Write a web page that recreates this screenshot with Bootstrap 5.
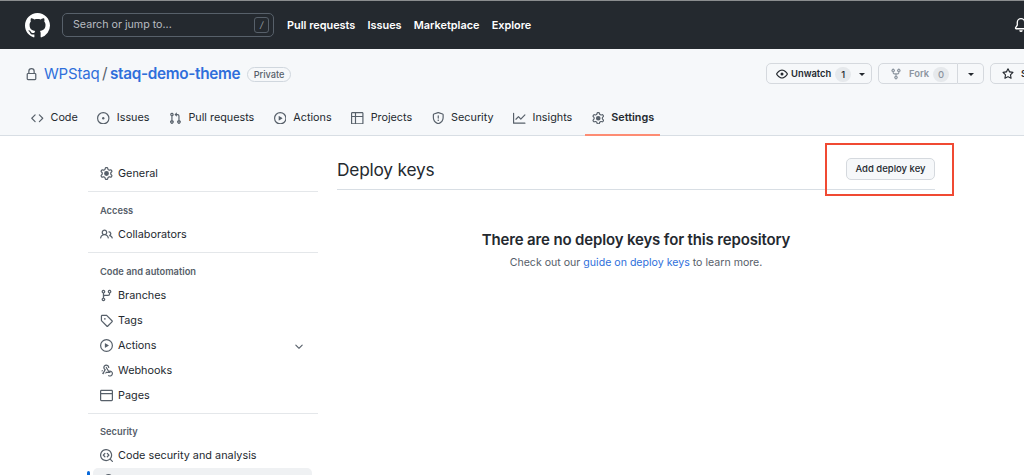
<!doctype html>
<html lang="en">
<head>
<meta charset="utf-8">
<title>Deploy keys</title>
<link rel="stylesheet" href="https://cdn.jsdelivr.net/npm/bootstrap@5.3.0/dist/css/bootstrap.min.css">
<style>
html,body{height:475px;overflow:hidden}
body{font-family:"Inter","Liberation Sans",sans-serif;color:#24292f;font-size:11.6px;background:#fff}
a{text-decoration:none}
.oc{fill:currentColor;flex:none;display:block}
.gh-top{height:49px;background:#24292f;border-top:1px solid #8b8d8f;padding-left:25px;color:#fff}
.gh-logo{width:25px;height:25px;margin-right:12px}
.gh-search{width:212px;height:24px;border:1px solid #57606a;border-radius:5px;padding:0 4px 0 10px;color:#b8bcc1;font-size:10.7px;margin-right:13px}
.gh-slash{width:15px;height:16px;border:1px solid #57606a;border-radius:3px;font-size:9px;line-height:14px;text-align:center;color:#9aa0a6;font-style:italic}
.gh-link{color:#fff;font-weight:600;font-size:10.9px;margin-right:12.2px;white-space:nowrap}
.gh-bell{position:absolute;left:1014px;top:18px;width:14px;height:14px;color:#fff}
.gh-head{height:87px;background:#f6f8fa;border-bottom:1px solid #d8dee4;position:relative}
.gh-titlebar{height:50px;padding:0 0 0 25px;position:relative}
.gh-lock{width:13px;height:13px;color:#57606a;margin-right:6px}
.gh-owner{font-size:15px;color:#2f6fdb;letter-spacing:-.2px}
.gh-sep{font-size:15.4px;color:#57606a;margin:0 2.5px}
.gh-repo{font-size:15.3px;font-weight:600;color:#2f6fdb;letter-spacing:-.3px}
.gh-private{margin-left:7px;height:15px;border:1px solid #d0d7de;border-radius:8px;padding:0 5.5px;font-size:9.2px;line-height:13px;font-weight:500;color:#57606a}
.gh-actions{position:absolute;left:766px;top:14px;width:320px;gap:6px}
.gh-btn{height:21px;border:1px solid #d5d9de;border-radius:5px;background:#f6f8fa;font-size:9.4px;font-weight:600;color:#24292f;padding:1px 0 0;white-space:nowrap}
.gh-btn.off{color:#8c959f}
.gh-count{background:#e6e9ec;border-radius:8px;min-width:16px;height:15px;line-height:15px;text-align:center;font-size:9.5px;font-weight:500;padding:0 2px}
.gh-caret{width:0;height:0;border-left:3px solid transparent;border-right:3px solid transparent;border-top:3.5px solid #24292f}
.gh-ico-a{margin:0 3px 0 9px}
.gh-ico-b{margin:0 7px 0 11px}
.gh-tabs{padding-left:24.5px;margin-top:3px;height:33px;flex-wrap:nowrap;gap:0}
.gh-tab{height:34px;padding:0 6.5px;margin-right:6.5px;color:#24292f;font-size:10.8px;gap:7px;border-bottom:2px solid transparent;white-space:nowrap}
.gh-tab .oc{width:12.5px;height:12.5px;color:#57606a}
.gh-tab.on{font-weight:600;border-bottom-color:#fd8c73;padding-right:6px}
.gh-page{padding-left:88px;gap:19px}
.gh-side{width:230px;flex:none;padding-top:25px}
.gh-item{height:25px;padding-left:12px;gap:5px;color:#24292f;font-size:10.85px;position:relative}
.gh-item .oc{width:13px;height:13px;color:#57606a}
.gh-rule{border-top:1px solid #e4e7ea;margin:5px 0 10px}
.gh-rule.gh-tight{margin-bottom:9px}
.gh-cap{font-size:9.3px;font-weight:600;color:#57606a;height:18px;line-height:18px;padding-left:12px;margin-bottom:2px}
.gh-sel{background:#eff1f3;border-radius:5px;margin:0 6px 0 5px;padding-left:7px;height:25px}
.gh-sel::before{content:"";position:absolute;left:-6px;top:3px;width:3px;height:20px;border-radius:2px;background:#0969da}
.gh-chev{margin-left:auto;margin-right:13px;width:12px!important;height:12px!important}
.gh-main{width:598px;flex:none;padding-top:21px;position:relative}
.gh-mhead{height:33px;border-bottom:1px solid #d8dee4}
.gh-mhead h1{font-size:17.3px;font-weight:400;margin:0;line-height:25px;letter-spacing:-.2px}
.gh-add{height:22px;width:89px;border:1px solid #d5d9de;border-radius:5px;background:#f6f8fa;color:#24292f;font-size:9.5px;font-weight:500;padding:1px 0 0;margin-top:1px}
.gh-mark{position:absolute;left:488px;top:7px;width:129px;height:53px;border:2px solid #f04a33;pointer-events:none}
.gh-empty{text-align:center;padding-top:40px}
.gh-empty h2{font-size:15px;font-weight:600;margin:0;line-height:20px;letter-spacing:-.15px}
.gh-empty p{font-size:10.6px;color:#57606a;margin:5px 0 0;line-height:16px}
.gh-empty a{color:#2f6fdb}
</style>
</head>
<body>
<svg width="0" height="0" class="position-absolute">
<symbol id="i-gear" viewBox="0 0 16 16"><path d="M7.429 1.525a6.593 6.593 0 011.142 0c.036.003.108.036.137.146l.289 1.105c.147.56.55.967.997 1.189.174.086.341.183.501.29.417.278.97.423 1.53.27l1.102-.303c.11-.03.175.016.195.046.219.31.41.641.573.989.014.031.022.11-.059.19l-.815.806c-.411.406-.562.957-.53 1.456a4.588 4.588 0 010 .582c-.032.499.119 1.05.53 1.456l.815.806c.08.08.073.159.059.19a6.494 6.494 0 01-.573.99c-.02.029-.086.074-.195.045l-1.103-.303c-.559-.153-1.112-.008-1.529.27-.16.107-.327.204-.5.29-.449.222-.851.628-.998 1.189l-.289 1.105c-.029.11-.101.143-.137.146a6.613 6.613 0 01-1.142 0c-.036-.003-.108-.037-.137-.146l-.289-1.105c-.147-.56-.55-.967-.997-1.189a4.502 4.502 0 01-.501-.29c-.417-.278-.97-.423-1.53-.27l-1.102.303c-.11.03-.175-.016-.195-.046a6.492 6.492 0 01-.573-.989c-.014-.031-.022-.11.059-.19l.815-.806c.411-.406.562-.957.53-1.456a4.587 4.587 0 010-.582c.032-.499-.119-1.05-.53-1.456l-.815-.806c-.08-.08-.073-.159-.059-.19a6.44 6.44 0 01.573-.99c.02-.029.086-.075.195-.045l1.103.303c.559.153 1.112.008 1.529-.27.16-.107.327-.204.5-.29.449-.222.851-.628.998-1.189l.289-1.105c.029-.11.101-.143.137-.146zM8 0c-.236 0-.47.01-.701.03-.743.065-1.29.615-1.458 1.261l-.29 1.106c-.017.066-.078.158-.211.224a5.994 5.994 0 00-.668.386c-.123.082-.233.09-.3.071L3.27 2.776c-.644-.177-1.392.02-1.82.63a7.977 7.977 0 00-.704 1.217c-.315.675-.111 1.422.363 1.891l.815.806c.05.048.098.147.088.294a6.084 6.084 0 000 .772c.01.147-.038.246-.088.294l-.815.806c-.474.469-.678 1.216-.363 1.891.2.428.436.835.704 1.218.428.609 1.176.806 1.82.63l1.103-.303c.066-.019.176-.011.299.071.213.143.436.272.668.386.133.066.194.158.212.224l.289 1.106c.169.646.715 1.196 1.458 1.26a8.094 8.094 0 001.402 0c.743-.064 1.29-.614 1.458-1.26l.29-1.106c.017-.066.078-.158.211-.224a5.98 5.98 0 00.668-.386c.123-.082.233-.09.3-.071l1.102.302c.644.177 1.392-.02 1.82-.63.268-.382.505-.789.704-1.217.315-.675.111-1.422-.364-1.891l-.814-.806c-.05-.048-.098-.147-.088-.294a6.1 6.1 0 000-.772c-.01-.147.039-.246.088-.294l.814-.806c.475-.469.679-1.216.364-1.891a7.992 7.992 0 00-.704-1.218c-.428-.609-1.176-.806-1.82-.63l-1.103.303c-.066.019-.176.011-.299-.071a5.991 5.991 0 00-.668-.386c-.133-.066-.194-.158-.212-.224L10.16 1.29C9.99.645 9.444.095 8.701.031A8.094 8.094 0 008 0zm1.5 8a1.5 1.5 0 11-3 0 1.5 1.5 0 013 0zM11 8a3 3 0 11-6 0 3 3 0 016 0z"/></symbol>
<symbol id="i-play" viewBox="0 0 16 16"><path d="M1.5 8a6.5 6.5 0 1113 0 6.5 6.5 0 01-13 0zM8 0a8 8 0 100 16A8 8 0 008 0zM6.379 5.227A.25.25 0 006 5.442v5.117a.25.25 0 00.379.214l4.264-2.559a.25.25 0 000-.428L6.379 5.227z"/></symbol>
</svg>

<header class="gh-top d-flex align-items-center">
  <svg class="oc gh-logo" viewBox="0 0 16 16"><path d="M8 0C3.58 0 0 3.58 0 8c0 3.54 2.29 6.53 5.47 7.59.4.07.55-.17.55-.38 0-.19-.01-.82-.01-1.49-2.01.37-2.53-.49-2.69-.94-.09-.23-.48-.94-.82-1.13-.28-.15-.68-.52-.01-.53.63-.01 1.08.58 1.23.82.72 1.21 1.87.87 2.33.66.07-.52.28-.87.51-1.07-1.78-.2-3.64-.89-3.64-3.95 0-.87.31-1.59.82-2.15-.08-.2-.36-1.02.08-2.12 0 0 .67-.21 2.2.82.64-.18 1.32-.27 2-.27.68 0 1.36.09 2 .27 1.53-1.04 2.2-.82 2.2-.82.44 1.1.16 1.92.08 2.12.51.56.82 1.27.82 2.15 0 3.07-1.87 3.75-3.65 3.95.29.25.54.73.54 1.48 0 1.07-.01 1.93-.01 2.2 0 .21.15.46.55.38A8.013 8.013 0 0016 8c0-4.42-3.58-8-8-8z"/></svg>
  <div class="gh-search d-flex align-items-center justify-content-between"><span>Search or jump to...</span><span class="gh-slash">/</span></div>
  <a class="gh-link" href="#">Pull requests</a>
  <a class="gh-link" href="#">Issues</a>
  <a class="gh-link" href="#">Marketplace</a>
  <a class="gh-link" href="#">Explore</a>
  <svg class="oc gh-bell" viewBox="0 0 16 16"><path d="M8 16a2 2 0 001.985-1.75c.017-.137-.097-.25-.235-.25h-3.5c-.138 0-.252.113-.235.25A2 2 0 008 16z"/><path fill-rule="evenodd" d="M3 5a5 5 0 0110 0v2.947c0 .05.015.098.042.139l1.703 2.555A1.518 1.518 0 0113.482 13H2.518a1.518 1.518 0 01-1.263-2.36l1.703-2.554A.25.25 0 003 7.947V5zm5-3.5A3.5 3.5 0 004.5 5v2.947c0 .346-.102.683-.294.97l-1.703 2.556a.018.018 0 00-.003.01l.001.006c0 .002.002.004.004.006a.017.017 0 00.006.004l.007.001h10.964l.007-.001a.018.018 0 00.006-.004.016.016 0 00.004-.006l.001-.007a.017.017 0 00-.003-.01l-1.703-2.554a1.75 1.75 0 01-.294-.97V5A3.5 3.5 0 008 1.5z"/></svg>
</header>

<section class="gh-head">
  <div class="gh-titlebar d-flex align-items-center">
    <svg class="oc gh-lock" viewBox="0 0 16 16"><path fill-rule="evenodd" d="M4 4v2h-.25A1.75 1.75 0 002 7.75v5.5c0 .966.784 1.75 1.75 1.75h8.5A1.75 1.75 0 0014 13.25v-5.5A1.75 1.75 0 0012.25 6H12V4a4 4 0 10-8 0zm6.5 2V4a2.5 2.5 0 00-5 0v2h5zM12 7.5h.25a.25.25 0 01.25.25v5.5a.25.25 0 01-.25.25h-8.5a.25.25 0 01-.25-.25v-5.5a.25.25 0 01.25-.25H12z"/></svg>
    <a class="gh-owner" href="#">WPStaq</a><span class="gh-sep">/</span><a class="gh-repo" href="#">staq-demo-theme</a>
    <span class="gh-private">Private</span>
    <div class="gh-actions d-flex">
      <button class="gh-btn d-flex align-items-center" style="width:106px"><svg class="oc gh-ico-a" width="12" height="12" viewBox="0 0 16 16"><path fill-rule="evenodd" d="M1.679 7.932c.412-.621 1.242-1.75 2.366-2.717C5.175 4.242 6.527 3.5 8 3.5c1.473 0 2.824.742 3.955 1.715 1.124.967 1.954 2.096 2.366 2.717a.119.119 0 010 .136c-.412.621-1.242 1.75-2.366 2.717C10.825 11.758 9.473 12.5 8 12.5c-1.473 0-2.824-.742-3.955-1.715C2.92 9.818 2.09 8.69 1.679 8.068a.119.119 0 010-.136zM8 2c-1.981 0-3.67.992-4.933 2.078C1.797 5.169.88 6.423.43 7.1a1.619 1.619 0 000 1.798c.45.678 1.367 1.932 2.637 3.024C4.329 13.008 6.019 14 8 14c1.981 0 3.67-.992 4.933-2.078 1.27-1.091 2.187-2.345 2.637-3.023a1.619 1.619 0 000-1.798c-.45-.678-1.367-1.932-2.637-3.023C11.671 2.992 9.981 2 8 2zm0 8a2 2 0 100-4 2 2 0 000 4z"/></svg>Unwatch<span class="gh-count ms-1">1</span><span class="gh-caret ms-2"></span></button>
      <div class="d-flex">
        <button class="gh-btn off d-flex align-items-center rounded-end-0" style="width:80px"><svg class="oc gh-ico-b" width="12" height="12" viewBox="0 0 16 16"><path fill-rule="evenodd" d="M5 3.25a.75.75 0 11-1.5 0 .75.75 0 011.5 0zm0 2.122a2.25 2.25 0 10-1.5 0v.878A2.25 2.25 0 005.75 8.5h1.5v2.128a2.251 2.251 0 101.5 0V8.5h1.5a2.25 2.25 0 002.25-2.25v-.878a2.25 2.25 0 10-1.5 0v.878a.75.75 0 01-.75.75h-4.5A.75.75 0 015 6.25v-.878zm3.75 7.378a.75.75 0 11-1.5 0 .75.75 0 011.5 0zm3-8.75a.75.75 0 100-1.5.75.75 0 000 1.5z"/></svg>Fork<span class="gh-count ms-1">0</span></button>
        <button class="gh-btn d-flex align-items-center justify-content-center rounded-start-0 border-start-0" style="width:26px"><span class="gh-caret"></span></button>
      </div>
      <button class="gh-btn d-flex align-items-center" style="width:80px"><svg class="oc gh-ico-b" width="12" height="12" viewBox="0 0 16 16"><path fill-rule="evenodd" d="M8 .25a.75.75 0 01.673.418l1.882 3.815 4.21.612a.75.75 0 01.416 1.279l-3.046 2.97.719 4.192a.75.75 0 01-1.088.791L8 12.347l-3.766 1.98a.75.75 0 01-1.088-.79l.72-4.194L.818 6.374a.75.75 0 01.416-1.28l4.21-.611L7.327.668A.75.75 0 018 .25zm0 2.445L6.615 5.5a.75.75 0 01-.564.41l-3.097.45 2.24 2.184a.75.75 0 01.216.664l-.528 3.084 2.769-1.456a.75.75 0 01.698 0l2.77 1.456-.53-3.084a.75.75 0 01.216-.664l2.24-2.183-3.096-.45a.75.75 0 01-.564-.41L8 2.694v.001z"/></svg>Star</button>
    </div>
  </div>
  <nav class="nav gh-tabs">
    <a class="gh-tab nav-link d-flex align-items-center" href="#"><svg class="oc" viewBox="0 0 16 16"><path fill-rule="evenodd" d="M4.72 3.22a.75.75 0 011.06 1.06L2.06 8l3.72 3.72a.75.75 0 11-1.06 1.06L.47 8.53a.75.75 0 010-1.06l4.25-4.25zm6.56 0a.75.75 0 10-1.06 1.06L13.94 8l-3.72 3.72a.75.75 0 101.06 1.06l4.25-4.25a.75.75 0 000-1.06l-4.25-4.25z"/></svg>Code</a>
    <a class="gh-tab nav-link d-flex align-items-center" href="#"><svg class="oc" viewBox="0 0 16 16"><path d="M8 9.5a1.5 1.5 0 100-3 1.5 1.5 0 000 3z"/><path fill-rule="evenodd" d="M8 0a8 8 0 100 16A8 8 0 008 0zM1.5 8a6.5 6.5 0 1113 0 6.5 6.5 0 01-13 0z"/></svg>Issues</a>
    <a class="gh-tab nav-link d-flex align-items-center" href="#"><svg class="oc" viewBox="0 0 16 16"><path fill-rule="evenodd" d="M7.177 3.073L9.573.677A.25.25 0 0110 .854v4.792a.25.25 0 01-.427.177L7.177 3.427a.25.25 0 010-.354zM3.75 2.5a.75.75 0 100 1.5.75.75 0 000-1.5zm-2.25.75a2.25 2.25 0 113 2.122v5.256a2.251 2.251 0 11-1.5 0V5.372A2.25 2.25 0 011.5 3.25zM11 2.5h-1V4h1a1 1 0 011 1v5.628a2.251 2.251 0 101.5 0V5A2.5 2.5 0 0011 2.5zm1 10.25a.75.75 0 111.5 0 .75.75 0 01-1.5 0zM3.75 12a.75.75 0 100 1.5.75.75 0 000-1.5z"/></svg>Pull requests</a>
    <a class="gh-tab nav-link d-flex align-items-center" href="#"><svg class="oc"><use href="#i-play"/></svg>Actions</a>
    <a class="gh-tab nav-link d-flex align-items-center" href="#"><svg class="oc" viewBox="0 0 16 16"><path fill-rule="evenodd" d="M0 1.75C0 .784.784 0 1.75 0h12.5C15.216 0 16 .784 16 1.75v12.5A1.75 1.75 0 0114.25 16H1.75A1.75 1.75 0 010 14.25V1.75zM6.5 6.5v8h7.75a.25.25 0 00.25-.25V6.5h-8zm8-1.5V1.75a.25.25 0 00-.25-.25H6.5V5h8zM5 1.5H1.75a.25.25 0 00-.25.25V5H5V1.5zM1.5 6.5v7.75c0 .138.112.25.25.25H5v-8H1.5z"/></svg>Projects</a>
    <a class="gh-tab nav-link d-flex align-items-center" href="#"><svg class="oc" viewBox="0 0 16 16"><path fill-rule="evenodd" d="M7.467.133a1.75 1.75 0 011.066 0l5.25 1.68A1.75 1.75 0 0115 3.48V7c0 1.566-.32 3.182-1.303 4.682-.983 1.498-2.585 2.813-5.032 3.855a1.7 1.7 0 01-1.33 0c-2.447-1.042-4.049-2.357-5.032-3.855C1.32 10.182 1 8.566 1 7V3.48a1.75 1.75 0 011.217-1.667l5.25-1.68zm.61 1.429a.25.25 0 00-.153 0l-5.25 1.68a.25.25 0 00-.174.238V7c0 1.358.275 2.666 1.057 3.86.784 1.194 2.121 2.34 4.366 3.297a.2.2 0 00.154 0c2.245-.956 3.582-2.104 4.366-3.298C13.225 9.666 13.5 8.36 13.5 7V3.48a.25.25 0 00-.174-.237l-5.25-1.68zM9 10.5a1 1 0 11-2 0 1 1 0 012 0zm-.25-5.75a.75.75 0 10-1.5 0v3a.75.75 0 001.5 0v-3z"/></svg>Security</a>
    <a class="gh-tab nav-link d-flex align-items-center" href="#"><svg class="oc" viewBox="0 0 16 16"><path fill-rule="evenodd" d="M1.5 1.75a.75.75 0 00-1.5 0v12.5c0 .414.336.75.75.75h14.5a.75.75 0 000-1.5H1.5V1.75zm14.28 2.53a.75.75 0 00-1.06-1.06L10 7.94 7.53 5.47a.75.75 0 00-1.06 0L3.22 8.72a.75.75 0 001.06 1.06L7 7.06l2.47 2.47a.75.75 0 001.06 0l5.25-5.25z"/></svg>Insights</a>
    <a class="gh-tab on nav-link d-flex align-items-center" href="#"><svg class="oc"><use href="#i-gear"/></svg>Settings</a>
  </nav>
</section>

<div class="gh-page d-flex">
  <aside class="gh-side">
    <a class="gh-item d-flex align-items-center" href="#"><svg class="oc"><use href="#i-gear"/></svg>General</a>
    <div class="gh-rule"></div>
    <div class="gh-cap">Access</div>
    <a class="gh-item d-flex align-items-center" href="#"><svg class="oc" viewBox="0 0 16 16"><path fill-rule="evenodd" d="M5.5 3.5a2 2 0 100 4 2 2 0 000-4zM2 5.5a3.5 3.5 0 115.898 2.549 5.507 5.507 0 013.034 4.084.75.75 0 11-1.482.235 4.001 4.001 0 00-7.9 0 .75.75 0 01-1.482-.236A5.507 5.507 0 013.102 8.05 3.49 3.49 0 012 5.5zM11 4a.75.75 0 100 1.5 1.5 1.5 0 01.666 2.844.75.75 0 00-.416.672v.352a.75.75 0 00.574.73c1.2.289 2.162 1.2 2.522 2.372a.75.75 0 101.434-.44 5.01 5.01 0 00-2.56-3.012A3 3 0 0011 4z"/></svg>Collaborators</a>
    <div class="gh-rule"></div>
    <div class="gh-cap">Code and automation</div>
    <a class="gh-item d-flex align-items-center" href="#"><svg class="oc" viewBox="0 0 16 16"><path fill-rule="evenodd" d="M11.75 2.5a.75.75 0 100 1.5.75.75 0 000-1.5zm-2.25.75a2.25 2.25 0 113 2.122V6A2.5 2.5 0 0110 8.5H6a1 1 0 00-1 1v1.128a2.251 2.251 0 11-1.5 0V5.372a2.25 2.25 0 111.5 0v1.836A2.492 2.492 0 016 7h4a1 1 0 001-1v-.628A2.25 2.25 0 019.5 3.25zM4.25 12a.75.75 0 100 1.5.75.75 0 000-1.5zM3.5 3.25a.75.75 0 111.5 0 .75.75 0 01-1.5 0z"/></svg>Branches</a>
    <a class="gh-item d-flex align-items-center" href="#"><svg class="oc" viewBox="0 0 16 16"><path fill-rule="evenodd" d="M2.5 7.775V2.75a.25.25 0 01.25-.25h5.025a.25.25 0 01.177.073l6.25 6.25a.25.25 0 010 .354l-5.025 5.025a.25.25 0 01-.354 0l-6.25-6.25a.25.25 0 01-.073-.177zm-1.5 0V2.75C1 1.784 1.784 1 2.75 1h5.025c.464 0 .91.184 1.238.513l6.25 6.25a1.75 1.75 0 010 2.474l-5.026 5.026a1.75 1.75 0 01-2.474 0l-6.25-6.25A1.75 1.75 0 011 7.775zM6 5a1 1 0 100 2 1 1 0 000-2z"/></svg>Tags</a>
    <a class="gh-item d-flex align-items-center" href="#"><svg class="oc"><use href="#i-play"/></svg>Actions<svg class="oc gh-chev" viewBox="0 0 16 16"><path fill-rule="evenodd" d="M12.78 6.22a.75.75 0 010 1.06l-4.25 4.25a.75.75 0 01-1.06 0L3.22 7.28a.75.75 0 011.06-1.06L8 9.94l3.72-3.72a.75.75 0 011.06 0z"/></svg></a>
    <a class="gh-item d-flex align-items-center" href="#"><svg class="oc" viewBox="0 0 16 16"><path d="M5.5 4.25a2.25 2.25 0 014.5 0 .75.75 0 001.5 0 3.75 3.75 0 10-6.14 2.889l-2.272 4.258a.75.75 0 001.324.706L7 7.25a.75.75 0 00-.309-1.015A2.25 2.25 0 015.5 4.25z"/><path d="M7.364 3.607a.75.75 0 011.03.257l2.608 4.349a3.75 3.75 0 11-.628 6.785.75.75 0 01.752-1.299 2.25 2.25 0 10-.033-3.88.75.75 0 01-1.03-.256L7.107 4.636a.75.75 0 01.257-1.03z"/><path d="M2.75 7.5a.75.75 0 01.75.75 2.25 2.25 0 103.375 1.949.75.75 0 01.375-.649h5a.75.75 0 010 1.5H8.246A3.75 3.75 0 012 8.25a.75.75 0 01.75-.75z"/></svg>Webhooks</a>
    <a class="gh-item d-flex align-items-center" href="#"><svg class="oc" viewBox="0 0 16 16"><path fill-rule="evenodd" d="M0 2.75C0 1.784.784 1 1.75 1h12.5c.966 0 1.75.784 1.75 1.75v10.5A1.75 1.75 0 0114.25 15H1.75A1.75 1.75 0 010 13.25V2.75zm1.75-.25a.25.25 0 00-.25.25V5h13V2.75a.25.25 0 00-.25-.25H1.75zM14.5 6.5h-13v6.75c0 .138.112.25.25.25h12.5a.25.25 0 00.25-.25V6.5z"/></svg>Pages</a>
    <div class="gh-rule gh-tight"></div>
    <div class="gh-cap">Security</div>
    <a class="gh-item d-flex align-items-center" href="#"><svg class="oc" viewBox="0 0 16 16"><path d="M8.47 4.97a.75.75 0 000 1.06L9.94 7.5 8.47 8.97a.75.75 0 101.06 1.06l2-2a.75.75 0 000-1.06l-2-2a.75.75 0 00-1.06 0zM6.53 6.03a.75.75 0 00-1.06-1.06l-2 2a.75.75 0 000 1.06l2 2a.75.75 0 101.06-1.06L5.06 7.5l1.47-1.47z"/><path fill-rule="evenodd" d="M12.246 13.307a7.5 7.5 0 111.06-1.06l2.474 2.473a.75.75 0 11-1.06 1.06l-2.474-2.473zM1.5 7.5a6 6 0 1110.386 4.094.75.75 0 00-.292.293A6 6 0 011.5 7.5z"/></svg>Code security and analysis</a>
    <a class="gh-item gh-sel d-flex align-items-center" href="#"><svg class="oc" viewBox="0 0 16 16"><path fill-rule="evenodd" d="M6.5 5.5a4 4 0 112.731 3.795.75.75 0 00-.768.18L7.44 10.5H6.25a.75.75 0 00-.75.75v1.19l-.06.06H4.25a.75.75 0 00-.75.75v1.19l-.06.06H1.75a.25.25 0 01-.25-.25v-1.69l5.024-5.023a.75.75 0 00.181-.768A3.995 3.995 0 016.5 5.5zm4-5.5a5.5 5.5 0 00-5.348 6.788L.22 11.72a.75.75 0 00-.22.53v2C0 15.216.784 16 1.75 16h2a.75.75 0 00.53-.22l.5-.5a.75.75 0 00.22-.53V14h.75a.75.75 0 00.53-.22l.5-.5a.75.75 0 00.22-.53V12h.75a.75.75 0 00.53-.22l.932-.932A5.5 5.5 0 1010.5 0zm.5 6a1 1 0 100-2 1 1 0 000 2z"/></svg>Deploy keys</a>
  </aside>
  <main class="gh-main">
    <div class="gh-mhead d-flex align-items-start justify-content-between">
      <h1>Deploy keys</h1>
      <button class="gh-add">Add deploy key</button>
    </div>
    <div class="gh-mark"></div>
    <div class="gh-empty">
      <h2>There are no deploy keys for this repository</h2>
      <p>Check out our <a href="#">guide on deploy keys</a> to learn more.</p>
    </div>
  </main>
</div>
<script src="https://cdn.jsdelivr.net/npm/bootstrap@5.3.0/dist/js/bootstrap.bundle.min.js"></script>
</body>
</html>
